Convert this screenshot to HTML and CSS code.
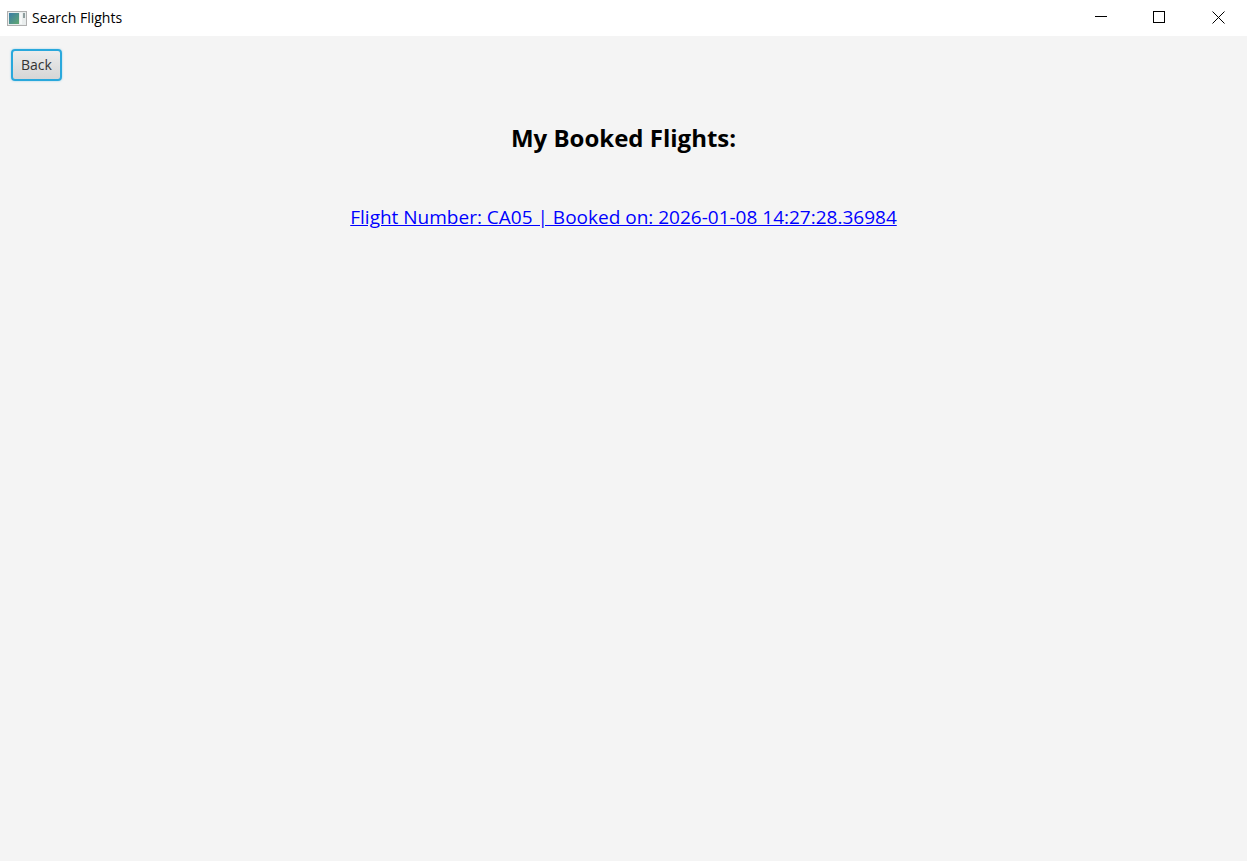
FILE: index.html
```html
<!DOCTYPE html>
<html lang="en">
<head>
  <meta charset="UTF-8" />
  <title>Search Flights</title>
  <link rel="stylesheet" href="styles.css">
</head>
<body>
  <div class="titlebar">
    <div class="app-title">
      <svg class="app-icon" width="20" height="15" viewBox="0 0 20 15">
        <defs>
          <linearGradient id="iconFill" x1="0" y1="0" x2="1" y2="1">
            <stop offset="0" stop-color="#3a7ca8" />
            <stop offset="1" stop-color="#62a870" />
          </linearGradient>
        </defs>
        <rect x="0.5" y="0.5" width="19" height="14" fill="#e9eded" stroke="#b0b0b0" />
        <rect x="2" y="2" width="10" height="11" fill="url(#iconFill)" />
        <rect x="13" y="2" width="2" height="11" fill="#f6f8f8" />
        <rect x="16" y="2" width="2" height="5" fill="#8f9f9f" />
      </svg>
      <span class="app-name">Search Flights</span>
    </div>
    <div class="window-controls">
      <button class="win-btn" aria-label="Minimize">
        <svg width="12" height="12" viewBox="0 0 12 12"><path d="M0 5.5H12" stroke="#000" fill="none" /></svg>
      </button>
      <button class="win-btn" aria-label="Maximize">
        <svg width="12" height="12" viewBox="0 0 12 12"><rect x="0.5" y="0.5" width="11" height="11" stroke="#000" fill="none" /></svg>
      </button>
      <button class="win-btn close-btn" aria-label="Close">
        <svg width="13" height="13" viewBox="0 0 13 13"><path d="M0.5 0.5L12.5 12.5M12.5 0.5L0.5 12.5" stroke="#000" fill="none" /></svg>
      </button>
    </div>
  </div>

  <div class="content">
    <button class="back-btn">Back</button>
    <h1>My Booked Flights:</h1>
    <a class="flight-link" href="#">Flight Number: CA05 | Booked on: 2026-01-08 14:27:28.36984</a>
  </div>
</body>
</html>
```

FILE: styles.css
```css
html, body { height: 100%; }
body { margin: 0; font-family: "Open Sans", "Noto Sans", Arial, sans-serif; background: #f4f4f4; display: flex; flex-direction: column; overflow: hidden; }

.titlebar { height: 36px; background: #fff; display: flex; justify-content: space-between; align-items: center; flex-shrink: 0; }
.app-title { display: flex; align-items: center; gap: 5px; padding-left: 7px; font-size: 14px; color: #000; }
.app-name { padding-bottom: 2px; }
.app-icon { display: block; }
.window-controls { display: flex; align-self: stretch; }
.win-btn { width: 58px; padding: 0 0 2px; border: none; background: transparent; display: flex; align-items: center; justify-content: center; }
.close-btn { margin-left: 1px; }

.content { flex: 1; display: flex; flex-direction: column; align-items: center; padding-top: 13px; }
.back-btn { align-self: flex-start; margin-left: 11px; width: 51px; height: 32px; padding: 0 0 2px; font-family: inherit; font-size: 14px; color: #333; background: linear-gradient(#ececec, #d6d6d6); border: 2px solid #29a8dc; border-radius: 4px; box-shadow: 0 0 2px rgba(41,168,220,0.5); }
h1 { margin: 41px 0 0; font-size: 24px; line-height: 32px; font-weight: 700; color: #000; }
.flight-link { margin-top: 50px; font-size: 19px; line-height: 26px; color: #0000ff; }
```
